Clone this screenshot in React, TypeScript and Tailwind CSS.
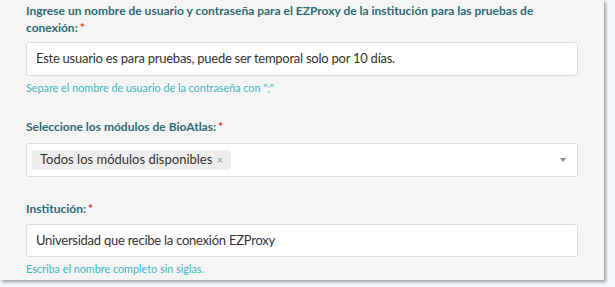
const Label = ({ children }: { children: React.ReactNode }) => (
    <label className="block text-[12px] leading-[17px] font-bold text-[#2e6b73]">
        {children}
        <span className="text-[#e0312f] ml-[2px]">*</span>
    </label>
);

const Help = ({ children }: { children: React.ReactNode }) => (
    <p className="text-[10.8px] leading-[14px] text-[#3db5bd] mt-[5px]">{children}</p>
);

export default function App() {
    return (
        <div className="w-[615px] h-[287px] bg-[#f3f8fa] overflow-hidden" style={{ fontFamily: 'Lato, "Open Sans", sans-serif' }}>
            <div className="w-[604px] h-[280px] bg-[#f5f5f5] shadow-[2px_2px_3px_rgba(0,0,0,0.35)] px-[26px] pt-[2px]">
                <Label>
                    Ingrese un nombre de usuario y contraseña para el EZProxy de la institución para las pruebas de conexión:
                </Label>
                <div className="mt-[6px] h-[34px] bg-white border border-[#dcdcdc] rounded-[3px] flex items-center px-[9px] text-[13px] tracking-[-0.25px] text-[#333]">
                    Este usuario es para pruebas, puede ser temporal solo por 10 días.
                </div>
                <Help>Separe el nombre de usuario de la contraseña con ";"</Help>

                <div className="mt-[23px]">
                    <Label>Seleccione los módulos de BioAtlas:</Label>
                </div>
                <div className="mt-[8px] h-[34px] bg-white border border-[#dcdcdc] rounded-[3px] flex items-center justify-between pl-[5px] pr-[11px]">
                    <span className="h-[20px] bg-[#eeeeee] rounded-[3px] px-[8px] flex items-center gap-[4px] text-[13px] text-[#333]">
                        Todos los módulos disponibles
                        <span className="text-[12px] text-[#999]">×</span>
                    </span>
                    <svg width="6" height="4" viewBox="0 0 6 4"><path d="M0 0h6L3 4z" fill="#888" /></svg>
                </div>

                <div className="mt-[23px]">
                    <Label>Institución:</Label>
                </div>
                <div className="mt-[7px] h-[33px] bg-white border border-[#dcdcdc] rounded-[3px] flex items-center px-[9px] text-[13px] tracking-[-0.25px] text-[#333]">
                    Universidad que recibe la conexión EZProxy
                </div>
                <div className="mt-[2px]">
                    <Help>Escriba el nombre completo sin siglas.</Help>
                </div>
            </div>
        </div>
    );
}
